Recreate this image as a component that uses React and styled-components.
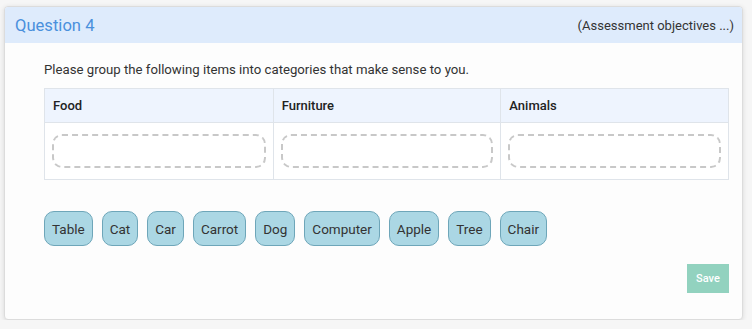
import React from 'react';
import styled, { createGlobalStyle } from 'styled-components';

const GlobalStyle = createGlobalStyle`
  body {
    margin: 0;
    background: #f6f6f6;
    font-family: Roboto, "Liberation Sans", sans-serif;
    color: #333;
  }
`;

const Card = styled.section`
  margin: 6px 0 0 4px;
  width: 739px;
  height: 314px;
  box-sizing: border-box;
  background: #fdfdfd;
  border: 1px solid #dcdcdc;
  border-radius: 4px;
  box-shadow: 0 1px 5px rgba(0, 0, 0, 0.12);
  display: flex;
  flex-direction: column;
  overflow: hidden;
`;

const Header = styled.header`
  height: 36px;
  display: flex;
  align-items: center;
  justify-content: space-between;
  padding: 0 8px 0 10px;
  background: #deebfc;
`;

const Title = styled.h2`
  margin: 0;
  font-size: 16.6px;
  font-weight: 400;
  color: #4a90dc;
`;

const Objectives = styled.span`
  font-size: 13px;
  color: #333;
`;

const Body = styled.div`
  flex: 1;
  display: flex;
  flex-direction: column;
  padding: 19px 13px 0 39px;
`;

const Prompt = styled.p`
  margin: 0 0 10px;
  font-size: 13.2px;
  line-height: 16px;
  color: #333;
`;

const Table = styled.div`
  display: grid;
  grid-template-columns: repeat(3, 1fr);
  border: 1px solid #dfe4ea;
`;

const HeadCell = styled.div`
  height: 33px;
  display: flex;
  align-items: center;
  padding: 0 8px;
  background: #eef4fe;
  font-size: 13px;
  font-weight: 500;
  color: #222;
  border-bottom: 1px solid #dfe4ea;
  border-left: ${(p) => (p.first ? 'none' : '1px solid #dfe4ea')};
`;

const DropCell = styled.div`
  padding: 11px 7px 11px 7px;
  background: #fff;
  border-left: ${(p) => (p.first ? 'none' : '1px solid #dfe4ea')};
`;

const DropZone = styled.div`
  height: 34px;
  box-sizing: border-box;
  border: 2px dashed #c8c8c8;
  border-radius: 10px;
`;

const Chips = styled.div`
  display: flex;
  gap: 9px;
  margin-top: 31px;
`;

const Chip = styled.button`
  height: 35px;
  padding: 0 7px;
  box-sizing: border-box;
  background: #abd7e4;
  border: 1px solid #6ea6b9;
  border-radius: 10px;
  font-family: Roboto, "Liberation Sans", sans-serif;
  font-size: 13.5px;
  color: #333;
`;

const Footer = styled.div`
  display: flex;
  justify-content: flex-end;
  margin-top: 18px;
`;

const SaveButton = styled.button`
  width: 42px;
  height: 29px;
  padding: 0;
  background: #92d2bf;
  border: none;
  color: #fff;
  font-family: Roboto, "Liberation Sans", sans-serif;
  font-size: 11px;
  font-weight: 500;
`;

const categories = ['Food', 'Furniture', 'Animals'];
const items = ['Table', 'Cat', 'Car', 'Carrot', 'Dog', 'Computer', 'Apple', 'Tree', 'Chair'];

export default function App() {
  return (
    <>
      <GlobalStyle />
      <Card>
        <Header>
          <Title>Question 4</Title>
          <Objectives>(Assessment objectives ...)</Objectives>
        </Header>
        <Body>
          <Prompt>Please group the following items into categories that make sense to you.</Prompt>
          <Table>
            {categories.map((c, i) => (
              <HeadCell key={c} first={i === 0}>{c}</HeadCell>
            ))}
            {categories.map((c, i) => (
              <DropCell key={c} first={i === 0}>
                <DropZone />
              </DropCell>
            ))}
          </Table>
          <Chips>
            {items.map((item) => (
              <Chip key={item}>{item}</Chip>
            ))}
          </Chips>
          <Footer>
            <SaveButton>Save</SaveButton>
          </Footer>
        </Body>
      </Card>
    </>
  );
}
